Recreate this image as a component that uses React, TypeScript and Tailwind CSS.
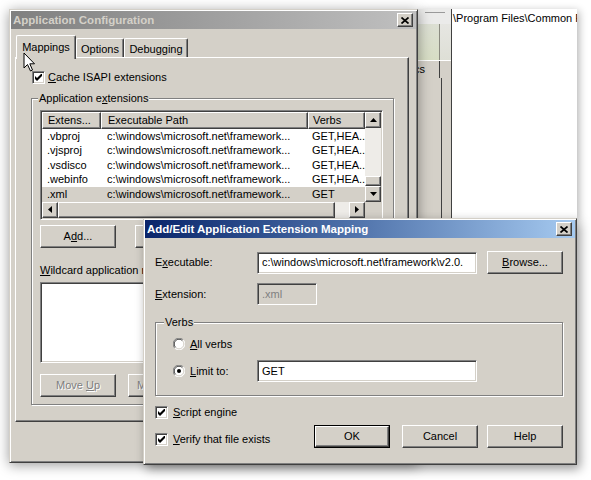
import React from "react";

const raised =
  "bg-[#d4d0c8] border border-t-white border-l-white border-r-[#404040] border-b-[#404040] shadow-[inset_-1px_-1px_0_#808080]";
const sunken =
  "border border-t-[#808080] border-l-[#808080] border-r-white border-b-white shadow-[inset_1px_1px_0_#404040,inset_-1px_-1px_0_#d4d0c8]";
const etched =
  "border border-[#808080] shadow-[inset_1px_1px_0_#ffffff,1px_1px_0_#ffffff]";

function U({ children }: { children: React.ReactNode }) {
  return <span className="underline underline-offset-1 decoration-1">{children}</span>;
}

function Button({
  children,
  disabled,
  className = "",
}: {
  children?: React.ReactNode;
  disabled?: boolean;
  className?: string;
}) {
  return (
    <div
      className={`${raised} w-[76px] h-[23px] flex items-center justify-center shrink-0 ${
        disabled ? "text-[#808080] [text-shadow:1px_1px_0_#ffffff]" : "text-black"
      } ${className}`}
    >
      <span className="whitespace-pre">{children}</span>
    </div>
  );
}

function Check({ checked }: { checked?: boolean }) {
  return (
    <div className={`${sunken} w-[13px] h-[13px] bg-white flex items-center justify-center shrink-0`}>
      {checked && (
        <svg width="7" height="7" viewBox="0 0 7 7">
          <path d="M0 2L2 4L7 -1L7 2L2 7L0 5Z" fill="black" />
        </svg>
      )}
    </div>
  );
}

function Radio({ checked }: { checked?: boolean }) {
  return (
    <svg width="12" height="12" viewBox="0 0 12 12" className="shrink-0">
      <circle cx="6" cy="6" r="5.5" fill="white" />
      <path d="M10.2 1.8A5.5 5.5 0 0 0 1.8 10.2" stroke="#808080" fill="none" />
      <path d="M9.4 2.6A4.6 4.6 0 0 0 2.6 9.4" stroke="#404040" fill="none" />
      <path d="M1.8 10.2A5.5 5.5 0 0 0 10.2 1.8" stroke="#ffffff" fill="none" />
      <path d="M2.6 9.4A4.6 4.6 0 0 0 9.4 2.6" stroke="#d4d0c8" fill="none" />
      {checked && <circle cx="6" cy="6" r="2" fill="black" />}
    </svg>
  );
}

function ArrowBtn({ dir }: { dir: "up" | "down" | "left" | "right" }) {
  const paths = {
    up: "M3.5 0L7 4H0Z",
    down: "M0 0H7L3.5 4Z",
    left: "M4 0V7L0 3.5Z",
    right: "M0 0L4 3.5L0 7Z",
  };
  const vert = dir === "up" || dir === "down";
  return (
    <div className={`${raised} w-[16px] h-[16px] flex items-center justify-center shrink-0`}>
      <svg width={vert ? 7 : 4} height={vert ? 4 : 7} viewBox={vert ? "0 0 7 4" : "0 0 4 7"}>
        <path d={paths[dir]} fill="black" />
      </svg>
    </div>
  );
}

function CloseBtn() {
  return (
    <div className={`${raised} w-[16px] h-[14px] flex items-center justify-center shrink-0`}>
      <svg width="8" height="7" viewBox="0 0 8 7">
        <path d="M0.5 0.5L7.5 6.5M7.5 0.5L0.5 6.5" stroke="black" strokeWidth="1.7" />
      </svg>
    </div>
  );
}

const rows = [
  { ext: ".vbproj", verbs: "GET,HEA..." },
  { ext: ".vjsproj", verbs: "GET,HEA..." },
  { ext: ".vsdisco", verbs: "GET,HEA..." },
  { ext: ".webinfo", verbs: "GET,HEA..." },
  { ext: ".xml", verbs: "GET", sel: true },
];

function ListView() {
  return (
    <div className={`${sunken} w-[343px] bg-white flex p-[1px]`}>
      <div className="w-[323px] flex flex-col">
        <div className="flex h-[17px]">
          <div className={`${raised} w-[59px] flex items-center pl-[5px] overflow-hidden whitespace-nowrap`}>Extens...</div>
          <div className={`${raised} w-[207px] flex items-center pl-[6px] overflow-hidden whitespace-nowrap`}>
            Executable Path
          </div>
          <div className={`${raised} w-[57px] flex items-center pl-[4px] overflow-hidden whitespace-nowrap`}>Verbs</div>
        </div>
        <div className="flex flex-col">
          {rows.map((r) => (
            <div
              key={r.ext}
              className={`flex h-[14.5px] items-center whitespace-nowrap ${r.sel ? "bg-[#d4d0c8]" : "bg-white"}`}
            >
              <div className="w-[59px] pl-[5px] overflow-hidden">{r.ext}</div>
              <div className="w-[207px] pl-[6px] overflow-hidden">c:\windows\microsoft.net\framework...</div>
              <div className="w-[57px] pl-[4px] overflow-hidden">{r.verbs}</div>
            </div>
          ))}
        </div>
        <div className="flex h-[16px]">
          <ArrowBtn dir="left" />
          <div className={`${raised} w-[277px] h-[16px]`} />
          <div className="flex-1 bg-[#eeece8]" />
          <ArrowBtn dir="right" />
        </div>
      </div>
      <div className="w-[16px] flex flex-col">
        <ArrowBtn dir="up" />
        <div className="flex-1 bg-[#eeece8] flex flex-col justify-end">
          <div className={`${raised} h-[10px]`} />
        </div>
        <ArrowBtn dir="down" />
        <div className="h-[16px] bg-[#d4d0c8]" />
      </div>
    </div>
  );
}

function Cursor() {
  return (
    <svg
      width="14"
      height="22"
      viewBox="0 0 14 22"
      className="absolute left-[23px] top-[52px] z-20"
    >
      <path
        d="M1 1L1 16L4.5 12.5L7.5 19L9.5 18L6.8 11.8L11.5 11.8Z"
        fill="white"
        stroke="black"
        strokeWidth="1"
        strokeLinejoin="round"
      />
    </svg>
  );
}

export default function App() {
  return (
    <div className="relative w-[591px] h-[480px] bg-white overflow-hidden font-['Liberation_Sans',Arial,sans-serif] text-[11px] leading-[13px] text-black">
      {/* background window at right */}
      <div className="absolute left-[418px] top-[9px] w-[159px] h-[209px] flex shadow-[2px_2px_8px_rgba(0,0,0,0.3)]">
        <div className="w-[33px] flex flex-col bg-[#d4d0c8]">
          <div className="h-[15px] bg-[#ebebea] flex items-start pt-[3px] pl-[7px]">
            <div className="w-[20px] h-[1px] bg-[#9a9a9a]" />
          </div>
          <div className="h-[36px] flex">
            <div className="w-[22px] bg-gradient-to-b from-[#dcdfd3] to-[#d7ddc4] border-r border-r-[#8a8a80]" />
            <div className="w-[11px] bg-gradient-to-b from-[#e6e6e2] to-[#dedfd6]" />
          </div>
          <div className="h-[18px] flex border-t border-t-white">
            <div className="w-[22px] border-r border-r-[#404040] overflow-hidden flex justify-end items-center pr-[14px] whitespace-nowrap">
              Statistics
            </div>
          </div>
          <div className="flex-1 flex">
            <div className="w-[24px] border-r border-r-[#404040]" />
          </div>
        </div>
        <div className="flex-1 bg-white border-l border-l-[#404040] pl-[1px] pt-[3px] whitespace-nowrap overflow-hidden">
          \Program Files\Common Files\Microsoft Shared
        </div>
      </div>

      {/* main window */}
      <div className="absolute left-[9px] top-[9px] w-[409px] h-[454px] bg-[#d4d0c8] border border-t-[#d4d0c8] border-l-[#d4d0c8] border-r-[#404040] border-b-[#404040] shadow-[inset_1px_1px_0_#ffffff,inset_-1px_-1px_0_#808080,0_2px_12px_rgba(0,0,0,0.4)] p-[1px] flex flex-col">
        <div className="h-[18px] bg-gradient-to-r from-[#808080] to-[#c0c0c0] flex items-center pl-[2px] pr-[3px]">
          <span className="font-bold text-[11.5px] text-[#d4d0c8]">Application Configuration</span>
          <div className="ml-auto">
            <CloseBtn />
          </div>
        </div>
        <div className="pl-[4px] flex flex-col">
          <div className="h-[28px] flex items-end pl-[1px]">
            <div className="relative z-10 -mb-[2px] h-[24px] w-[60px] bg-[#d4d0c8] border-t border-l border-r border-t-white border-l-white border-r-[#404040] rounded-tl-[2px] rounded-tr-[2px] shadow-[inset_-1px_0_0_#808080] flex justify-center pt-[5px]">
              Mappings
            </div>
            <div className="h-[19px] w-[48px] border-t border-l border-r border-t-white border-l-white border-r-[#404040] rounded-tl-[2px] rounded-tr-[2px] shadow-[inset_-1px_0_0_#808080] flex justify-center pt-[4px]">
              Options
            </div>
            <div className="h-[19px] w-[64px] border-t border-l border-r border-t-white border-l-white border-r-[#404040] rounded-tl-[2px] rounded-tr-[2px] shadow-[inset_-1px_0_0_#808080] flex justify-center pt-[4px]">
              Debugging
            </div>
          </div>
          <div className="w-[394px] h-[365px] border border-t-white border-l-white border-r-[#404040] border-b-[#404040] shadow-[inset_-1px_-1px_0_#808080] flex flex-col">
            <div className="mt-[13px] ml-[16px] h-[13px] flex items-center gap-[3px]">
              <Check checked />
              <span>
                <U>C</U>ache ISAPI extensions
              </span>
            </div>
            <div className={`mt-[14px] ml-[15px] w-[363px] ${etched} pl-[8px] pb-[7px] flex flex-col`}>
              <div className="-mt-[7px] -ml-[2px] w-fit px-[1px] bg-[#d4d0c8] leading-[13px]">
                Application e<U>x</U>tensions
              </div>
              <div className="mt-[5px]">
                <ListView />
              </div>
              <div className="mt-[5.5px] flex gap-[19px]">
                <Button>
                  A<U>d</U>d...
                </Button>
                <Button>
                  <U>E</U>dit...
                </Button>
              </div>
              <div className="mt-[16px] h-[13px] whitespace-nowrap">
                <U>W</U>ildcard application mappings (order of implementation):
              </div>
              <div className={`mt-[5px] ${sunken} w-[343px] h-[81px] bg-white`} />
              <div className="mt-[11px] flex gap-[12px]">
                <Button disabled>
                  Move <U>U</U>p
                </Button>
                <Button disabled>
                  Move Do<U>w</U>n
                </Button>
              </div>
            </div>
          </div>
        </div>
      </div>

      <Cursor />

      {/* child dialog */}
      <div className="absolute z-30 left-[143px] top-[218px] w-[434px] h-[247px] bg-[#d4d0c8] border border-t-[#d4d0c8] border-l-[#d4d0c8] border-r-[#404040] border-b-[#404040] shadow-[inset_1px_1px_0_#ffffff,inset_-1px_-1px_0_#808080,3px_4px_10px_rgba(0,0,0,0.4)] p-[1px] flex flex-col">
        <div className="h-[18px] bg-gradient-to-r from-[#0a246a] to-[#a6caf0] flex items-center pl-[2px] pr-[3px]">
          <span className="font-bold text-[11.5px] text-white whitespace-nowrap">
            Add/Edit Application Extension Mapping
          </span>
          <div className="ml-auto">
            <CloseBtn />
          </div>
        </div>
        <div className="flex flex-col pl-[10px] pr-[12px]">
          <div className="mt-[13px] h-[23px] flex items-center">
            <div className="w-[102px]">
              E<U>x</U>ecutable:
            </div>
            <div className={`${sunken} w-[220px] h-[22px] bg-white flex items-center pl-[4px] overflow-hidden whitespace-nowrap`}>
              <span>c:\windows\microsoft.net\framework\v2.0.</span>
            </div>
            <Button className="ml-[10px]">
              <U>B</U>rowse...
            </Button>
          </div>
          <div className="mt-[9px] h-[22px] flex items-center">
            <div className="w-[102px]">
              <U>E</U>xtension:
            </div>
            <div className={`${sunken} w-[60px] h-[22px] bg-[#d4d0c8] text-[#808080] flex items-center pl-[4px]`}>
              .xml
            </div>
          </div>
          <div className={`mt-[17px] ${etched} pl-[17px] pb-[13px] flex flex-col`}>
            <div className="-mt-[7px] -ml-[9px] w-fit px-[1px] bg-[#d4d0c8] leading-[13px]">Verbs</div>
            <div className="mt-[4px] h-[22px] flex items-center">
              <Radio />
              <span className="ml-[5px]">
                <U>A</U>ll verbs
              </span>
            </div>
            <div className="mt-[5px] h-[22px] flex items-center">
              <div className="w-[84px] flex items-center">
                <Radio checked />
                <span className="ml-[5px]">
                  <U>L</U>imit to:
                </span>
              </div>
              <div className={`${sunken} w-[220px] h-[22px] bg-white flex items-center pl-[4px]`}>GET</div>
            </div>
          </div>
          <div className="mt-[10px] flex">
            <div className="flex flex-col gap-[14px]">
              <div className="h-[13px] flex items-center">
                <Check checked />
                <span className="ml-[5px]">
                  <U>S</U>cript engine
                </span>
              </div>
              <div className="h-[13px] flex items-center">
                <Check checked />
                <span className="ml-[5px]">
                  <U>V</U>erify that file exists
                </span>
              </div>
            </div>
            <div className="ml-auto mt-[19px] flex">
              <div className="w-[76px] h-[23px] border border-black flex">
                <div className={`${raised} flex-1 flex items-center justify-center`}>OK</div>
              </div>
              <Button className="ml-[12px]">Cancel</Button>
              <Button className="ml-[9px]">Help</Button>
            </div>
          </div>
        </div>
      </div>
    </div>
  );
}
